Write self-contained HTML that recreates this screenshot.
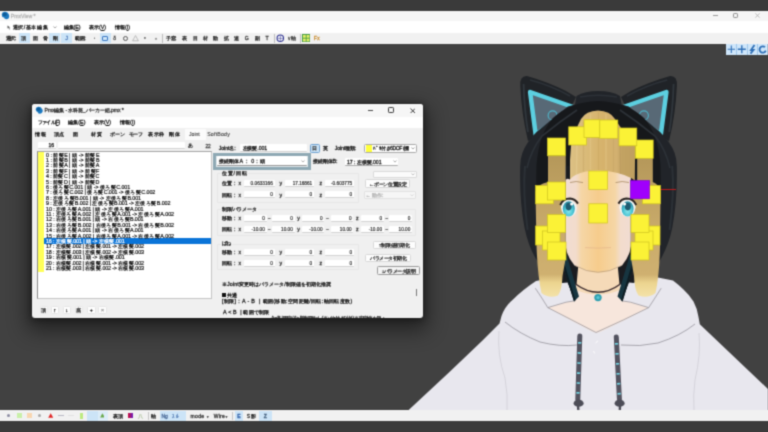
<!DOCTYPE html>
<html lang="ja"><head><meta charset="utf-8"><title>PmxView</title>
<style>
html,body{margin:0;padding:0;overflow:hidden;}
body{width:768px;height:432px;overflow:hidden;background:#414141;position:relative;font-family:"Liberation Sans",sans-serif;}
.b{position:absolute;box-sizing:border-box;}
.t{position:absolute;white-space:nowrap;overflow:visible;-webkit-text-stroke:0.27px currentColor;}
#dlg{position:absolute;left:31.5px;top:104px;width:391px;height:214px;background:#f0f0f0;border-radius:3px;box-shadow:0 8px 20px 5px rgba(0,0,0,.46),0 1px 6px 1px rgba(0,0,0,.34);overflow:hidden;}
.f{position:absolute;box-sizing:border-box;background:#fff;border-bottom:0.6px solid #d2d2d2;border-radius:1px;font-size:4.7px;color:#2a2a2a;-webkit-text-stroke:0.17px currentColor;text-align:right;padding-right:1.8px;white-space:nowrap;overflow:hidden;}
.btn{position:absolute;box-sizing:border-box;background:#fdfdfd;-webkit-text-stroke:0.24px currentColor;border:0.5px solid #d8d8d8;border-radius:1.5px;font-size:5.2px;color:#222;text-align:center;white-space:nowrap;overflow:hidden;}
#clip{position:absolute;left:0;top:0;width:768px;height:432px;overflow:hidden;}
#wrap{position:absolute;left:-16px;top:-16px;width:800px;height:464px;filter:url(#soft);}
#in{position:absolute;left:16px;top:16px;width:768px;height:432px;}
</style></head><body>
<svg width="0" height="0" style="position:absolute"><defs><filter id="soft" x="0" y="0" width="100%" height="100%" color-interpolation-filters="sRGB"><feConvolveMatrix order="3" kernelMatrix="0.03 0.12 0.03 0.12 0.4 0.12 0.03 0.12 0.03" edgeMode="duplicate" preserveAlpha="true"/></filter></defs></svg>
<div id="clip"><div id="wrap"><div id="in">
<div class="b" style="left:-16px;top:-16px;width:800px;height:464px;background:#414141"></div>
<svg class="b" style="left:0;top:0" width="768" height="432" viewBox="0 0 768 432">
<defs>
<linearGradient id="sideh" x1="0" y1="0" x2="0" y2="1"><stop offset="0" stop-color="#b5985a"/><stop offset=".5" stop-color="#c8aa6a"/><stop offset=".84" stop-color="#cfb070"/><stop offset=".9" stop-color="#ecd48f"/><stop offset="1" stop-color="#f4e2a8"/></linearGradient>
<linearGradient id="faceg" x1="0" y1="0" x2="1" y2="0"><stop offset="0" stop-color="#f1dcd2"/><stop offset=".16" stop-color="#f2dccc"/><stop offset=".24" stop-color="#f5d6a6"/><stop offset=".5" stop-color="#f6cc8c"/><stop offset=".76" stop-color="#f5d6a6"/><stop offset=".84" stop-color="#f2dccc"/><stop offset="1" stop-color="#f1dcd2"/></linearGradient>
<linearGradient id="hairc" x1="0" y1="0" x2="1" y2="0"><stop offset="0" stop-color="#dcc084"/><stop offset=".3" stop-color="#d9b976"/><stop offset=".5" stop-color="#d6b26c"/><stop offset=".72" stop-color="#d2b070"/><stop offset=".8" stop-color="#c2a262"/><stop offset="1" stop-color="#bf9f60"/></linearGradient>
<radialGradient id="iris" cx=".5" cy=".65" r=".6"><stop offset="0" stop-color="#8ae6ea"/><stop offset=".6" stop-color="#48c4d4"/><stop offset="1" stop-color="#2a8aa0"/></radialGradient>
</defs>
<!-- ears (behind hood) -->
<path d="M520.3 86 Q519.6 75.6 527 76 Q548 82 566 91 L576 97 L566 118 Q545 132 528 141 Q521.5 114 520.3 86Z" fill="#202327"/>
<path d="M676.9 86 Q677.6 75.6 670.2 76 Q649 82 631 91 L621 97 L631 118 Q652 132 669 141 Q675.7 114 676.9 86Z" fill="#202327"/>
<path d="M523.6 84 Q524.4 110 528 132" fill="none" stroke="#30363c" stroke-width="1.8"/>
<path d="M673.6 84 Q672.8 110 669.2 132" fill="none" stroke="#30363c" stroke-width="1.8"/>
<path d="M530 80 Q550 85 570 96" fill="none" stroke="#2d3238" stroke-width="1.6"/>
<path d="M667.2 80 Q647 85 627 96" fill="none" stroke="#2d3238" stroke-width="1.6"/>
<path d="M530.1 92.0 L574.6 107.5 L535.7 134.6 Z" fill="#586976" stroke="#5ccfe0" stroke-width="4.5" stroke-linejoin="round"/>
<path d="M666.4 92.0 L621.9 107.5 L660.8 134.6 Z" fill="#586976" stroke="#5ccfe0" stroke-width="4.5" stroke-linejoin="round"/>
<circle cx="552.6" cy="115.4" r="4.5" fill="none" stroke="#4fb4c8" stroke-width="1.1"/>
<circle cx="643.9" cy="115.4" r="4.5" fill="none" stroke="#4fb4c8" stroke-width="1.1"/>
<!-- hood (black) outer -->
<path d="M598 91 Q585 91 576.5 96 L575 104.5 L567.8 106.6 L536.8 131.8 Q526.5 142 522.4 153 Q520.2 159 520.2 166 Q519.2 200 524.6 228 Q528.6 248 538 262 L546 292 L575 300 L621 300 L652 292 L659 262 Q668.6 246 672.2 228 Q677.6 200 676.8 166 Q676.8 159 674.6 153 Q670.5 142 659.8 131.8 L628.8 106.6 L621.6 104.5 L620 96 Q612 91 598 91Z" fill="#212429"/>
<path d="M598 101 Q570 102 553 118 Q539 134 536.5 165 Q535.5 205 540 235 L548 262 L649 262 L657 235 Q661.5 205 660.5 165 Q658 134 644 118 Q627 102 598 101Z" fill="#16181b"/>
<!-- hood folds -->
<path d="M527 168 Q531 150 542 136 L560 122 L577 110" fill="none" stroke="#2c3137" stroke-width="1.6"/>
<path d="M670 168 Q666 150 655 136 L637 122 L620 110" fill="none" stroke="#2c3137" stroke-width="1.6"/>
<path d="M527.6 230 Q522.6 192 525 166" fill="none" stroke="#2b3036" stroke-width="2"/>
<path d="M669.6 230 Q674.6 192 672.2 166" fill="none" stroke="#2b3036" stroke-width="2"/>
<path d="M580 97 Q598 93.5 617 97" fill="none" stroke="#2c3137" stroke-width="1.4"/>
<!-- hoodie body -->
<path d="M406.5 412 L450 371.6 L482.5 340.6 L499.5 323.5 L501.5 316 Q505 306 513 299.5 Q523 289.5 536 281 L548 278.5 L556 282 L640 282 L650 277.5 L658 277.5 L673 280.5 Q679 285 683.5 289.5 Q689.5 295 693.5 301.5 Q697.5 309 698.5 317 L699.8 324.2 L768 389 L768 412 Z" fill="#e8e7ee"/>
<!-- seams -->
<path d="M499 331 Q497 355 505 378 Q508 395 507 410" fill="none" stroke="#cfced6" stroke-width=".8"/>
<path d="M699 333 Q701 355 695 380 Q693 395 694 410" fill="none" stroke="#cfced6" stroke-width=".8"/>
<path d="M505 322 Q520 334 540 342 Q560 347 577 345" fill="none" stroke="#8a8890" stroke-width=".7"/>
<path d="M695 324 Q680 336 658 343 Q640 347 621 345" fill="none" stroke="#8a8890" stroke-width=".7"/>
<!-- dark interior near neck -->
<path d="M562 255 L634.5 255 L634.5 283 L629 282.5 L621.3 300.8 L575.2 300.8 L567.5 282.5 L562 283Z" fill="#1a1c20"/>
<!-- chest skin -->
<path d="M548 307.5 L566 302.2 L575.5 300.6 L575.5 284 L621 284 L621 300.6 L630.5 302.2 L648.5 307.5 Q630 318 600 332 Q596 333.5 592 331.5 Q566 318 548 307.5 Z" fill="#f7e6dc"/>
<path d="M535.3 288.2 Q542 298 547.8 307.6 L566 302.2 L575 300.8 M547.8 307.6 Q572 320 596 332.5 Q624 320 648.7 307.6 L630.5 302.2 L621.5 300.8 M648.7 307.6 Q655 298 661.2 288.2" fill="none" stroke="#8f8c94" stroke-width=".7"/>
<!-- neck -->
<path d="M579 258 L617 258 L620 290 Q598 299 576 290Z" fill="#f5dab8"/>
<!-- straps -->
<path d="M560 256 L566.6 255 L579 296.5 L574 301.5 Z" fill="#173540"/><path d="M560 256 L562 255.6 L575.4 300 L574 301.5Z" fill="#0e1c22"/>
<path d="M636.5 256 L629.9 255 L617.5 296.5 L622.5 301.5 Z" fill="#173540"/><path d="M636.5 256 L634.5 255.6 L621.1 300 L622.5 301.5Z" fill="#0e1c22"/>

<!-- choker -->
<path d="M575.5 284 Q598 300.5 620.5 284" fill="none" stroke="#3a2a2c" stroke-width="1.5"/>
<circle cx="598" cy="297.6" r="3.7" fill="#2f9fb0"/><circle cx="598" cy="297.6" r="1.7" fill="#56c6d4"/>
<!-- side hair long -->
<path d="M548 156 L565.7 156 L565.7 258 L562.5 276 Q562 290 558 295.5 Q549 299 541.5 293 Q537.5 275 536.5 245 L535.5 192 Q537 184 548 182 Z" fill="url(#sideh)"/>
<path d="M652.8 158 L637.2 158 L637.2 181 L631 183 L631 258 L634 276 Q634.5 290 638.5 295.5 Q648 299 655.5 293 Q659.5 275 660 245 L660.5 192 Q659 184 652.8 182 Z" fill="url(#sideh)"/>
<!-- face -->
<path d="M565.7 166 L630.8 166 L630.8 246 Q630 256 622 265.5 Q608 272.6 598 272.6 Q588 272.6 574.5 265.5 Q566.5 256 565.7 246Z" fill="url(#faceg)"/>
<path d="M575 265.5 Q598 279 621.5 265.5" fill="none" stroke="#a89078" stroke-width=".6"/>
<path d="M585 247.6 Q598 248.6 611 247.6" fill="none" stroke="#e0b088" stroke-width=".6"/>
<!-- center hair -->
<path d="M598 110.6 Q586 111 581 119 Q575 130 571 146 L570 160 L570 179.5 Q574 174 586 171.5 Q598 169.5 610 171.5 Q626 174 634.8 180.5 L635 160 L635.2 146 Q622 130 615 119 Q610 111 598 110.6Z" fill="url(#hairc)"/>
<g stroke-width="1.3" fill="none" opacity=".45">
<path d="M577 140 L576.5 174" stroke="#e9d29a"/><path d="M583.5 122 L583.5 171.5" stroke="#c4a464"/><path d="M590.5 114 L590.5 170.5" stroke="#e6cc8e"/>
<path d="M598.5 112 L598.5 170" stroke="#c8a55e"/><path d="M606 114 L606 170.5" stroke="#e6cc8e"/><path d="M613.5 122 L613.5 172" stroke="#c4a464"/><path d="M620 132 L620.5 174" stroke="#b4945a"/>
</g>
<path d="M565.7 166 L570 166 L570 179.5 Q567 178 565.7 180Z" fill="#1a1c20"/>
<!-- eyes -->
<g>
<path d="M560.8 207 Q562 199.5 569 199.5 Q576 200.5 576.6 208 Q576 216.5 569 216.8 Q562 216 560.8 207Z" fill="#f2f6f6"/>
<ellipse cx="568.8" cy="208.8" rx="6" ry="7.6" fill="url(#iris)"/><ellipse cx="568.6" cy="206.6" rx="3" ry="3.8" fill="#1f5a70"/><circle cx="571.6" cy="204" r="1.5" fill="#fff"/>
<path d="M560.2 205 Q563 198.6 570 198.6 Q575 199 578 203.6" fill="none" stroke="#2a2422" stroke-width="2"/>
<path d="M619.4 207 Q620 200.5 627.5 199.5 Q634.5 199.5 635.6 207 Q634.5 216 627.5 216.8 Q620.5 216.5 619.4 207Z" fill="#f2f6f6"/>
<ellipse cx="627.6" cy="208.8" rx="6" ry="7.6" fill="url(#iris)"/><ellipse cx="627.8" cy="206.6" rx="3" ry="3.8" fill="#1f5a70"/><circle cx="624.6" cy="204" r="1.5" fill="#fff"/>
<path d="M636.2 205 Q633.4 198.6 626.4 198.6 Q621.4 199 618.4 203.6" fill="none" stroke="#2a2422" stroke-width="2"/>
<path d="M570 182.5 Q576 180.5 583 182.6" fill="none" stroke="#a88a62" stroke-width=".8"/><path d="M629 182.5 Q622 180.5 615.6 182.6" fill="none" stroke="#a88a62" stroke-width=".8"/>
</g>
<!-- drawstrings -->
<path d="M579.8 336 Q578.6 370 577.8 399" fill="none" stroke="#53535f" stroke-width="5" stroke-linecap="round"/>
<path d="M616.3 337 Q618 370 619.4 399" fill="none" stroke="#53535f" stroke-width="5" stroke-linecap="round"/>
<path d="M579.7 342 Q578.6 370 577.9 397" fill="none" stroke="#6fd0de" stroke-width="3.2" stroke-dasharray="1.7 8.3"/>
<path d="M616.5 343 Q618 370 619.3 397" fill="none" stroke="#6fd0de" stroke-width="3.2" stroke-dasharray="1.7 8.3"/>
<ellipse cx="578.6" cy="403.2" rx="5" ry="3.6" fill="#4c4c57"/><ellipse cx="619.6" cy="403.2" rx="5" ry="3.6" fill="#4c4c57"/>
<path d="M578 405 L578.4 411 M620 405 L619.8 411" stroke="#4c4c57" stroke-width="2.4"/>
<path d="M595.5 343 l2.4 -2 M593.5 351 l1.2 2.4" stroke="#fff" stroke-width=".9"/>
<!-- red axis line -->
<path d="M649 189.5 H676" stroke="#e01818" stroke-width=".8"/>
<!-- joint markers -->
<g fill="#fbf236" stroke="#cfc422" stroke-width=".7">
<rect x="535.5" y="185.5" width="18" height="18.3"/>
<rect x="642.5" y="185.5" width="18" height="18.3"/>
<rect x="547.4" y="138" width="18" height="17.8"/>
<rect x="635.2" y="140" width="18" height="18.3"/>
<rect x="568.7" y="126.8" width="17.8" height="18.2"/>
<rect x="619" y="128" width="17.8" height="17.8"/>
<rect x="584" y="119.8" width="16" height="17.7"/>
<rect x="599.8" y="120" width="18" height="18.3"/>
<rect x="588.8" y="171" width="18.7" height="18.5"/>
<rect x="588.8" y="203.8" width="18.7" height="19.2"/>
<rect x="547.5" y="182" width="18" height="18"/>
<rect x="535.5" y="226" width="17.5" height="19"/>
<rect x="642.5" y="226" width="17.5" height="19"/>
<rect x="542.5" y="231" width="17.5" height="19"/>
<rect x="635" y="231" width="18" height="19"/>
<rect x="547.5" y="214.5" width="18" height="18"/>
<rect x="631" y="214.5" width="18" height="18"/>
<rect x="547.5" y="242" width="18.5" height="18"/>
<rect x="631" y="242" width="18" height="18"/>
</g>
<rect x="630.5" y="180.5" width="19" height="18.3" fill="#a000fc" stroke="#7a00c8" stroke-width=".6"/>
</svg>


<div class="b" style="left:-10px;top:-10px;width:788px;height:20.5px;background:#3a3a3a;"></div>
<div class="b" style="left:-10px;top:10.5px;width:788px;height:10.5px;background:#f5f5f5;"></div>
<div class="b" style="left:-10px;top:21px;width:788px;height:11.5px;background:#ffffff;"></div>
<div class="b" style="left:-10px;top:32.5px;width:788px;height:11.5px;background:#f1f1f1;"></div>
<svg class="b" style="left:0.8px;top:11.3px" width="9" height="9" viewBox="0 0 9 9"><path d="M3.6 .7 Q6.6 .5 7.2 2.6 Q8.6 4 8.2 6 Q7.6 8.4 5.4 8.3 Q3.4 8.2 3 6.6 Q.6 6 .7 3.4 Q.9 .9 3.6 .7Z" fill="#1b78bf"/><path d="M3.4 1.6 Q5.6 1.4 5.8 3.2 Q5.8 5 3.8 5.2 Q1.8 5.2 1.7 3.4 Q1.7 1.8 3.4 1.6Z" fill="#0f5c98"/></svg>
<div class="t" style="left:10.8px;top:12.78px;font-size:5.2px;line-height:6.24px;color:#b4b4b4;letter-spacing:-0.033px;">PmxView *</div>
<div class="b" style="left:712.5px;top:15.4px;width:5px;height:0.6px;background:#9a9a9a;"></div>
<div class="b" style="left:733.4px;top:13.2px;width:4.8px;height:4.4px;border:0.6px solid #909090;border-radius:1.2px"></div>
<svg class="b" style="left:754.6px;top:13px" width="5" height="5" viewBox="0 0 5 5"><path d="M.4 .4L4.6 4.6M4.6 .4L.4 4.6" stroke="#a4a4a4" stroke-width=".7"/></svg>
<svg class="b" style="left:7.3px;top:24.6px" width="4" height="5" viewBox="0 0 4 5"><path d="M.5 .5V3.6L1.4 2.8L2.2 4.5L2.9 4.2L2.1 2.6H3.2Z" fill="#555"/></svg>
<div class="t" style="left:12.6px;top:23.66px;font-size:5.4px;line-height:6.48px;color:#222;letter-spacing:0.600px;">選択/基本編集</div>
<svg class="b" style="left:53.00px;top:25.70px" width="4.0" height="2.6" viewBox="0 0 4.0 2.6"><path d="M.5 .5L2.0 2.1L3.5 .5" fill="none" stroke="#666" stroke-width="0.6"/></svg>
<div class="t" style="left:63.7px;top:23.66px;font-size:5.4px;line-height:6.48px;color:#222;letter-spacing:-0.100px;">編集(<u>E</u>)</div>
<div class="t" style="left:88.8px;top:23.66px;font-size:5.4px;line-height:6.48px;color:#222;letter-spacing:0.040px;">表示(<u>V</u>)</div>
<div class="t" style="left:115px;top:23.66px;font-size:5.4px;line-height:6.48px;color:#222;letter-spacing:0.000px;">情報(<u>I</u>)</div>
<div class="t" style="left:5.6px;top:35.16px;font-size:5.4px;line-height:6.48px;color:#222;letter-spacing:-0.433px;">選択:</div>
<div class="b" style="left:19.4px;top:33.3px;width:10.8px;height:10.2px;background:#cce4f7;"></div>
<div class="b" style="left:49.4px;top:33.3px;width:10.8px;height:10.2px;background:#cce4f7;"></div>
<div class="b" style="left:61px;top:33.3px;width:11px;height:10.2px;background:#cce4f7;"></div>
<div class="t" style="left:21.4px;top:35.16px;font-size:5.4px;line-height:6.48px;color:#333;">頂</div>
<div class="t" style="left:32.8px;top:35.16px;font-size:5.4px;line-height:6.48px;color:#333;">面</div>
<div class="t" style="left:42.8px;top:35.16px;font-size:5.4px;line-height:6.48px;color:#333;">骨</div>
<div class="t" style="left:52.8px;top:35.16px;font-size:5.4px;line-height:6.48px;color:#333;">剛</div>
<div class="t" style="left:65.2px;top:35.16px;font-size:5.4px;line-height:6.48px;color:#4a78b8;">J</div>
<div class="t" style="left:75px;top:35.16px;font-size:5.4px;line-height:6.48px;color:#222;letter-spacing:-0.333px;">範囲:</div>
<div class="t" style="left:91.5px;top:35.52px;font-size:4.8px;line-height:5.76px;color:#444;">・</div>
<div class="b" style="left:99.7px;top:33.3px;width:11.3px;height:10.2px;background:#cce4f7;"></div>
<div class="b" style="left:102.2px;top:35.7px;width:6.2px;height:5.6px;border:0.8px solid #3b78c4;border-radius:1px;border-top-width:1.5px"></div>
<div class="t" style="left:113.3px;top:35.40px;font-size:5px;line-height:6.00px;color:#444;">δ</div>
<div class="b" style="left:122.8px;top:35.8px;width:5.4px;height:5.4px;border:0.7px solid #555;border-radius:3px"></div>
<svg class="b" style="left:132px;top:35.3px" width="7" height="6.4" viewBox="0 0 7 6.4"><path d="M3.5 .6 L6.4 5.8 L.6 5.8Z" fill="none" stroke="#999" stroke-width=".6"/></svg>
<div class="t" style="left:143.8px;top:36.12px;font-size:3.8px;line-height:4.56px;color:#666;">●</div>
<div class="t" style="left:154.8px;top:35.76px;font-size:4.4px;line-height:5.28px;color:#888;">×</div>
<div class="b" style="left:162.2px;top:34px;width:0.6px;height:9px;background:#bdbdbd;"></div>
<div class="t" style="left:166px;top:35.16px;font-size:5.4px;line-height:6.48px;color:#222;letter-spacing:-0.500px;">子窓:</div>
<div class="t" style="left:182.3px;top:35.28px;font-size:5.2px;line-height:6.24px;color:#333;">表</div>
<div class="t" style="left:192.5px;top:35.28px;font-size:5.2px;line-height:6.24px;color:#333;">目</div>
<div class="t" style="left:203px;top:35.28px;font-size:5.2px;line-height:6.24px;color:#333;">材</div>
<div class="t" style="left:213.3px;top:35.28px;font-size:5.2px;line-height:6.24px;color:#333;">動</div>
<div class="t" style="left:224px;top:35.28px;font-size:5.2px;line-height:6.24px;color:#333;">拡</div>
<div class="t" style="left:234.2px;top:35.28px;font-size:5.2px;line-height:6.24px;color:#333;">連</div>
<div class="t" style="left:244.8px;top:35.28px;font-size:5.2px;line-height:6.24px;color:#333;">G</div>
<div class="t" style="left:254.6px;top:35.28px;font-size:5.2px;line-height:6.24px;color:#333;">副</div>
<div class="t" style="left:265.4px;top:35.28px;font-size:5.2px;line-height:6.24px;color:#333;">T</div>
<div class="b" style="left:273.8px;top:34px;width:0.6px;height:9px;background:#bdbdbd;"></div>
<svg class="b" style="left:276px;top:34px" width="8.6" height="8.6" viewBox="0 0 8 8"><circle cx="4" cy="4" r="3" fill="#fff" stroke="#2b2f8e" stroke-width="1"/><path d="M4 1.5V6.5M1.5 4H6.5" stroke="#2b2f8e" stroke-width=".5"/></svg>
<div class="t" style="left:288px;top:35.72px;font-size:4.8px;line-height:5.76px;color:#444;letter-spacing:0.500px;">v軸</div>
<div class="b" style="left:300.4px;top:34px;width:0.6px;height:9px;background:#bdbdbd;"></div>
<svg class="b" style="left:302px;top:34px" width="8.4" height="8.4" viewBox="0 0 8 8"><rect x=".5" y=".5" width="7" height="7" fill="#e8f06a" stroke="#3f9a3f" stroke-width=".9"/><path d="M4 .5V7.5M.5 4H7.5" stroke="#3f9a3f" stroke-width=".8"/></svg>
<div class="t" style="left:314px;top:35.72px;font-size:4.8px;line-height:5.76px;color:#c88a2a;letter-spacing:0.250px;">Fx</div>
<div class="b" style="left:725.7px;top:44.3px;width:42.3px;height:10.4px;background:#cfe6fa;"></div>
<div class="b" style="left:735.95px;top:44.3px;width:0.6px;height:10.4px;background:#9fc6ea;"></div>
<div class="b" style="left:746.5000000000001px;top:44.3px;width:0.6px;height:10.4px;background:#9fc6ea;"></div>
<div class="b" style="left:757.0500000000001px;top:44.3px;width:0.6px;height:10.4px;background:#9fc6ea;"></div>
<svg class="b" style="left:725.7px;top:44.3px" width="42.3" height="10.4" viewBox="0 0 42.3 10.4"><g stroke="#2f6fb6" stroke-width="1.1" fill="none"><path d="M5.3 1.5V8.9M1.6 5.2H9"/><path d="M15.8 1.2V9.2M11.8 5.2H19.8" stroke-width="1.4"/><path d="M28.5 1 L25 6 L27.5 6 L24.5 9.6" stroke-width="1.8"/><path d="M39.8 6.6 A3.2 3.2 0 1 1 39 3.2" stroke-width="1.8"/></g></svg>
<div class="b" style="left:-10px;top:410.2px;width:788px;height:11.1px;background:#f1f1f1;"></div>
<div class="b" style="left:-10px;top:421.3px;width:788px;height:20.7px;background:#3b3b3b;"></div>
<div class="b" style="left:6.9px;top:413.9px;width:3.6px;height:3.6px;border-radius:2px;background:#8a8aa0"></div>
<div class="b" style="left:16.5px;top:413px;width:5.2px;height:5.4px;background:#c9f0a8;"></div>
<div class="b" style="left:26.5px;top:413px;width:5.2px;height:5.4px;background:#f8d6b0;"></div>
<div class="b" style="left:37.9px;top:413.9px;width:3.6px;height:3.6px;border-radius:2px;background:#a8a8a8"></div>
<svg class="b" style="left:47.5px;top:413px" width="5.4" height="5" viewBox="0 0 5.4 5"><path d="M2.7 .3L5.2 4.7H.2Z" fill="#e02424"/></svg>
<div class="b" style="left:57.5px;top:415.4px;width:6px;height:0.7px;background:#b8b8c4;"></div>
<div class="b" style="left:68px;top:415.4px;width:6px;height:0.7px;background:#e2e2e2;"></div>
<div class="b" style="left:80.3px;top:412.6px;width:2.6px;height:6.2px;background:#bdea80;"></div>
<div class="b" style="left:86.8px;top:411px;width:11.4px;height:9.6px;background:#cce4f7;"></div>
<div class="b" style="left:98.2px;top:411px;width:10px;height:9.6px;background:#dcecf8;"></div>
<svg class="b" style="left:99.5px;top:413.3px" width="4.8" height="4.6" viewBox="0 0 4.8 4.6"><path d="M2.4 .2L4.7 4.4H.1Z" fill="#69a84a"/></svg>
<div class="t" style="left:113px;top:412.68px;font-size:5.2px;line-height:6.24px;color:#222;letter-spacing:0.200px;">表頂</div>
<div class="b" style="left:128.3px;top:413.2px;width:5px;height:5px;background:linear-gradient(90deg,#d0103a,#6a20c0);"></div>
<div class="t" style="left:138.2px;top:412.80px;font-size:5px;line-height:6.00px;color:#b8c8a8;">八</div>
<div class="b" style="left:147.5px;top:411.5px;width:0.6px;height:8.5px;background:#c4c4c4;"></div>
<div class="t" style="left:151.3px;top:412.80px;font-size:5px;line-height:6.00px;color:#333;">軸</div>
<div class="b" style="left:159.7px;top:411px;width:26.6px;height:9.6px;background:#cce4f7;"></div>
<div class="t" style="left:161.5px;top:412.80px;font-size:5px;line-height:6.00px;color:#4a6a98;">Ng</div>
<div class="t" style="left:172.3px;top:412.80px;font-size:5px;line-height:6.00px;color:#5a82b8;letter-spacing:1.200px;">ｽﾙ</div>
<div class="t" style="left:190.5px;top:412.80px;font-size:5px;line-height:6.00px;color:#333;letter-spacing:0.367px;">mode <span style='font-size:3px;vertical-align:0.4px'>▼</span></div>
<div class="t" style="left:213.8px;top:412.80px;font-size:5px;line-height:6.00px;color:#333;letter-spacing:0.240px;">Wire<span style='font-size:3px;vertical-align:0.4px'>▼</span></div>
<div class="b" style="left:232px;top:411.5px;width:0.6px;height:8.5px;background:#c4c4c4;"></div>
<div class="b" style="left:234.7px;top:411px;width:8.6px;height:9.6px;background:#cce4f7;"></div>
<div class="t" style="left:237.2px;top:412.80px;font-size:5px;line-height:6.00px;color:#2f5fa8;font-weight:bold;">E</div>
<div class="t" style="left:246.8px;top:412.80px;font-size:5px;line-height:6.00px;color:#333;letter-spacing:0.600px;">S影</div>
<div class="b" style="left:259.3px;top:411px;width:12.4px;height:9.6px;background:#cce4f7;"></div>
<div class="t" style="left:263.8px;top:412.68px;font-size:5.2px;line-height:6.24px;color:#44607e;font-weight:bold;">Z</div>
<div id="dlg">
<div class="b" style="left:0.0px;top:0px;width:391px;height:13px;background:#f6f6f6;"></div>
<div class="b" style="left:0.0px;top:13px;width:391px;height:11px;background:#ffffff;"></div>
<svg class="b" style="left:3.299999999999997px;top:2.200000000000003px" width="8.4" height="8.4" viewBox="0 0 9 9"><path d="M3.6 .7 Q6.6 .5 7.2 2.6 Q8.6 4 8.2 6 Q7.6 8.4 5.4 8.3 Q3.4 8.2 3 6.6 Q.6 6 .7 3.4 Q.9 .9 3.6 .7Z" fill="#1b78bf"/><path d="M3.4 1.6 Q5.6 1.4 5.8 3.2 Q5.8 5 3.8 5.2 Q1.8 5.2 1.7 3.4 Q1.7 1.8 3.4 1.6Z" fill="#0f5c98"/></svg>
<div class="t" style="left:13.100000000000001px;top:3.48px;font-size:5.2px;line-height:6.24px;color:#333;letter-spacing:-0.157px;">Pmx編集 - 水科葵_パーカー組.pmx *</div>
<div class="b" style="left:336.5px;top:6.099999999999994px;width:4.8px;height:0.7px;background:#4a4a4a;"></div>
<div class="b" style="left:356.5px;top:3.299999999999997px;width:6.2px;height:5.6px;border:0.9px solid #3c3c3c;border-radius:1.2px"></div>
<svg class="b" style="left:378.1px;top:3.5999999999999943px" width="5.6" height="5.6" viewBox="0 0 5.6 5.6"><path d="M.5 .5L5.1 5.1M5.1 .5L.5 5.1" stroke="#3c3c3c" stroke-width="1"/></svg>
<div class="t" style="left:6.299999999999997px;top:15.46px;font-size:5.4px;line-height:6.48px;color:#222;letter-spacing:-0.743px;">ファイル(<u>F</u>)</div>
<div class="t" style="left:36.900000000000006px;top:15.46px;font-size:5.4px;line-height:6.48px;color:#222;letter-spacing:-0.040px;">編集(<u>E</u>)</div>
<div class="t" style="left:62.5px;top:15.46px;font-size:5.4px;line-height:6.48px;color:#222;letter-spacing:-0.020px;">表示(<u>V</u>)</div>
<div class="t" style="left:88.5px;top:15.46px;font-size:5.4px;line-height:6.48px;color:#222;letter-spacing:0.060px;">情報(<u>I</u>)</div>
<div class="b" style="left:153.5px;top:24.5px;width:20.5px;height:11px;background:#fbfbfb;"></div>
<div class="t" style="left:3.5px;top:26.66px;font-size:5.4px;line-height:6.48px;color:#222;letter-spacing:0.500px;">情報</div>
<div class="t" style="left:22.5px;top:26.66px;font-size:5.4px;line-height:6.48px;color:#222;letter-spacing:0.250px;">頂点</div>
<div class="t" style="left:41.0px;top:26.66px;font-size:5.4px;line-height:6.48px;color:#222;letter-spacing:0.500px;">面</div>
<div class="t" style="left:59.5px;top:26.66px;font-size:5.4px;line-height:6.48px;color:#222;letter-spacing:0.500px;">材質</div>
<div class="t" style="left:78.5px;top:26.66px;font-size:5.4px;line-height:6.48px;color:#222;letter-spacing:0.000px;">ボーン</div>
<div class="t" style="left:97.5px;top:26.66px;font-size:5.4px;line-height:6.48px;color:#222;letter-spacing:-0.733px;">モーフ</div>
<div class="t" style="left:116.9px;top:26.66px;font-size:5.4px;line-height:6.48px;color:#222;letter-spacing:0.133px;">表示枠</div>
<div class="t" style="left:137.5px;top:26.66px;font-size:5.4px;line-height:6.48px;color:#222;letter-spacing:0.750px;">剛体</div>
<div class="t" style="left:157.5px;top:26.78px;font-size:5.2px;line-height:6.24px;color:#2e2e2e;letter-spacing:-0.040px;-webkit-text-stroke:0.06px currentColor;">Joint</div>
<div class="t" style="left:175.7px;top:26.78px;font-size:5.2px;line-height:6.24px;color:#2e2e2e;letter-spacing:0.225px;-webkit-text-stroke:0.06px currentColor;">SoftBody</div>
<div class="f" style="left:6.00px;top:38.10px;width:18px;height:7.4px;line-height:7.2px;padding-right:1.5px;font-size:5px;color:#111;-webkit-text-stroke:0.25px #111;">16</div>
<div class="f" style="left:26.50px;top:38.10px;width:126.5px;height:7.4px;line-height:7.2px;"></div>
<div class="t" style="left:156.5px;top:38.92px;font-size:4.8px;line-height:5.76px;color:#333;">あ</div>
<div class="t" style="left:173.9px;top:40.42px;font-size:4.8px;line-height:5.76px;color:#444;letter-spacing:0.000px;">22</div>
<div class="b" style="left:5.5px;top:47px;width:174.5px;height:148px;background:#ffffff;border:0.7px solid #c4c4c4;border-left-color:#8a8a8a;border-top-color:#a4a4a4;"></div>
<div class="b" style="left:6.399999999999999px;top:47.80000000000001px;width:5.8px;height:119.8px;background:#ffff58;"></div>
<div class="b" style="left:12.299999999999997px;top:134.42px;width:167px;height:5.3px;background:#0a74d8;"></div>
<div class="b" style="left:14.100000000000001px;top:48.00px;width:660px;height:480px;transform:scale(.25);transform-origin:0 0;">
<div class="t" style="left:0;top:0.00px;font-size:21.6px;line-height:21.6px;color:#101010;-webkit-text-stroke:0.8px #101010;letter-spacing:-0.244px;">0 : 前髪E | 頭 -&gt; 前髪E</div>
<div class="t" style="left:0;top:21.58px;font-size:21.6px;line-height:21.6px;color:#101010;-webkit-text-stroke:0.8px #101010;letter-spacing:-0.244px;">1 : 前髪B | 頭 -&gt; 前髪B</div>
<div class="t" style="left:0;top:43.16px;font-size:21.6px;line-height:21.6px;color:#101010;-webkit-text-stroke:0.8px #101010;letter-spacing:-0.189px;">2 : 前髪A | 頭 -&gt; 前髪A</div>
<div class="t" style="left:0;top:64.74px;font-size:21.6px;line-height:21.6px;color:#101010;-webkit-text-stroke:0.8px #101010;letter-spacing:-0.133px;">3 : 前髪F | 頭 -&gt; 前髪F</div>
<div class="t" style="left:0;top:86.32px;font-size:21.6px;line-height:21.6px;color:#101010;-webkit-text-stroke:0.8px #101010;letter-spacing:-0.411px;">4 : 前髪C | 頭 -&gt; 前髪C</div>
<div class="t" style="left:0;top:107.90px;font-size:21.6px;line-height:21.6px;color:#101010;-webkit-text-stroke:0.8px #101010;letter-spacing:-0.411px;">5 : 前髪D | 頭 -&gt; 前髪D</div>
<div class="t" style="left:0;top:129.48px;font-size:21.6px;line-height:21.6px;color:#101010;-webkit-text-stroke:0.8px #101010;letter-spacing:-0.521px;">6 : 後ろ髪C.001 | 頭 -&gt; 後ろ髪C.001</div>
<div class="t" style="left:0;top:151.06px;font-size:21.6px;line-height:21.6px;color:#101010;-webkit-text-stroke:0.8px #101010;letter-spacing:-0.474px;">7 : 後ろ髪C.002 | 後ろ髪C.001 -&gt; 後ろ髪C.002</div>
<div class="t" style="left:0;top:172.64px;font-size:21.6px;line-height:21.6px;color:#101010;-webkit-text-stroke:0.8px #101010;letter-spacing:-0.413px;">8 : 左後ろ髪B.001 | 頭 -&gt; 左後ろ髪B.001</div>
<div class="t" style="left:0;top:194.22px;font-size:21.6px;line-height:21.6px;color:#101010;-webkit-text-stroke:0.8px #101010;letter-spacing:-0.484px;">9 : 左後ろ髪B.002 | 左後ろ髪B.001 -&gt; 左後ろ髪B.002</div>
<div class="t" style="left:0;top:215.80px;font-size:21.6px;line-height:21.6px;color:#101010;-webkit-text-stroke:0.8px #101010;letter-spacing:-0.465px;">10 : 左後ろ髪A.001 | 頭 -&gt; 左後ろ髪A.001</div>
<div class="t" style="left:0;top:237.38px;font-size:21.6px;line-height:21.6px;color:#101010;-webkit-text-stroke:0.8px #101010;letter-spacing:-0.359px;">11 : 左後ろ髪A.002 | 左後ろ髪A.001 -&gt; 左後ろ髪A.002</div>
<div class="t" style="left:0;top:258.96px;font-size:21.6px;line-height:21.6px;color:#101010;-webkit-text-stroke:0.8px #101010;letter-spacing:-0.465px;">12 : 右後ろ髪B.001 | 頭 -&gt; 右後ろ髪B.001</div>
<div class="t" style="left:0;top:280.54px;font-size:21.6px;line-height:21.6px;color:#101010;-webkit-text-stroke:0.8px #101010;letter-spacing:-0.410px;">13 : 右後ろ髪B.002 | 右後ろ髪B.001 -&gt; 右後ろ髪B.002</div>
<div class="t" style="left:0;top:302.12px;font-size:21.6px;line-height:21.6px;color:#101010;-webkit-text-stroke:0.8px #101010;letter-spacing:-0.465px;">14 : 右後ろ髪A.001 | 頭 -&gt; 右後ろ髪A.001</div>
<div class="t" style="left:0;top:323.70px;font-size:21.6px;line-height:21.6px;color:#101010;-webkit-text-stroke:0.8px #101010;letter-spacing:-0.410px;">15 : 右後ろ髪A.002 | 右後ろ髪A.001 -&gt; 右後ろ髪A.002</div>
<div class="t" style="left:0;top:345.28px;font-size:21.6px;line-height:21.6px;color:#ffffff;-webkit-text-stroke:0.8px #ffffff;letter-spacing:-0.570px;">16 : 左横髪.001 | 頭 -&gt; 左横髪.001</div>
<div class="t" style="left:0;top:366.86px;font-size:21.6px;line-height:21.6px;color:#101010;-webkit-text-stroke:0.8px #101010;letter-spacing:-0.739px;">17 : 左横髪.002 | 左横髪.001 -&gt; 左横髪.002</div>
<div class="t" style="left:0;top:388.44px;font-size:21.6px;line-height:21.6px;color:#101010;-webkit-text-stroke:0.8px #101010;letter-spacing:-0.739px;">18 : 左横髪.003 | 左横髪.002 -&gt; 左横髪.003</div>
<div class="t" style="left:0;top:410.02px;font-size:21.6px;line-height:21.6px;color:#101010;-webkit-text-stroke:0.8px #101010;letter-spacing:-0.570px;">19 : 右横髪.001 | 頭 -&gt; 右横髪.001</div>
<div class="t" style="left:0;top:431.60px;font-size:21.6px;line-height:21.6px;color:#101010;-webkit-text-stroke:0.8px #101010;letter-spacing:-0.739px;">20 : 右横髪.002 | 右横髪.001 -&gt; 右横髪.002</div>
<div class="t" style="left:0;top:453.18px;font-size:21.6px;line-height:21.6px;color:#101010;-webkit-text-stroke:0.8px #101010;letter-spacing:-0.739px;">21 : 右横髪.003 | 右横髪.002 -&gt; 右横髪.003</div>
</div>
<div class="btn" style="left:8.50px;top:201.80px;width:7.6px;height:8.4px;line-height:7.6000000000000005px;color:#222;font-size:5.2px;border-color:#e6e6e6;">頂</div>
<div class="btn" style="left:19.30px;top:201.80px;width:8.2px;height:8.4px;line-height:7.6000000000000005px;color:#222;font-size:5.2px;border-color:#e6e6e6;">↑</div>
<div class="btn" style="left:31.30px;top:201.80px;width:8.2px;height:8.4px;line-height:7.6000000000000005px;color:#222;font-size:5.2px;border-color:#e6e6e6;">↓</div>
<div class="btn" style="left:43.30px;top:201.80px;width:7.8px;height:8.4px;line-height:7.6000000000000005px;color:#222;font-size:5.2px;border-color:#e6e6e6;">底</div>
<div class="btn" style="left:55.10px;top:201.80px;width:9.4px;height:8.4px;line-height:7.6000000000000005px;color:#222;font-size:5.2px;border-color:#e6e6e6;">+</div>
<div class="btn" style="left:66.50px;top:201.80px;width:8.8px;height:8.4px;line-height:7.6000000000000005px;color:#999;font-size:5.2px;border-color:#e6e6e6;">×</div>
<div class="t" style="left:187.3px;top:41.12px;font-size:5.3px;line-height:6.36px;color:#222;letter-spacing:-0.143px;">Joint名:</div>
<div class="f" style="left:208.50px;top:40.40px;width:67px;height:7.6px;line-height:7.3999999999999995px;"></div>
<div class="t" style="left:211.0px;top:41.18px;font-size:5.2px;line-height:6.24px;color:#222;letter-spacing:-0.071px;">左横髪.001</div>
<div class="b" style="left:278.0px;top:39.80000000000001px;width:10.6px;height:8.8px;background:#cce4f7;border:0.6px solid #6ea0d0;border-radius:1.5px"></div>
<div class="t" style="left:280.8px;top:41.30px;font-size:5px;line-height:6.00px;color:#333;">日</div>
<div class="t" style="left:291.9px;top:40.88px;font-size:5.2px;line-height:6.24px;color:#222;">英</div>
<div class="t" style="left:303.3px;top:41.12px;font-size:5.3px;line-height:6.36px;color:#222;letter-spacing:-0.200px;">Joint種類:</div>
<div class="b" style="left:332.9px;top:40.19999999999999px;width:52.4px;height:8.8px;background:#fff;border:0.6px solid #a8a8a8;border-radius:1.5px"></div>
<div class="b" style="left:334.1px;top:41.19999999999999px;width:6.4px;height:6.8px;background:#ffff3c;"></div>
<div class="t" style="left:341.5px;top:41.48px;font-size:5.2px;line-height:6.24px;color:#222;letter-spacing:-0.483px;">ﾊﾞﾈ付き6DOF (標</div>
<svg class="b" style="left:379.10px;top:42.90px" width="4.0" height="2.6" viewBox="0 0 4.0 2.6"><path d="M.5 .5L2.0 2.1L3.5 .5" fill="none" stroke="#666" stroke-width="0.6"/></svg>
<div class="b" style="left:181.3px;top:48.599999999999994px;width:98.4px;height:17.6px;background:#dfe7ea;border:3px solid #8fa9b4;"></div>
<div class="b" style="left:185.5px;top:52.400000000000006px;width:90px;height:10px;background:#fff;border-radius:1px;border-bottom:0.6px solid #999"></div>
<div class="t" style="left:187.3px;top:54.26px;font-size:5.4px;line-height:6.48px;color:#222;letter-spacing:0.200px;">接続剛体A</div>
<div class="t" style="left:214.5px;top:54.26px;font-size:5.4px;line-height:6.48px;color:#222;letter-spacing:0.250px;">:&nbsp; 0 : 頭</div>
<svg class="b" style="left:269.50px;top:55.90px" width="4.0" height="2.6" viewBox="0 0 4.0 2.6"><path d="M.5 .5L2.0 2.1L3.5 .5" fill="none" stroke="#777" stroke-width="0.6"/></svg>
<div class="t" style="left:281.5px;top:54.26px;font-size:5.4px;line-height:6.48px;color:#222;letter-spacing:-0.100px;">接続剛体B:</div>
<div class="b" style="left:313.5px;top:53.599999999999994px;width:53.4px;height:8.6px;background:#fff;border-radius:1px;border-bottom:0.6px solid #aaa"></div>
<div class="t" style="left:315.4px;top:54.68px;font-size:5.2px;line-height:6.24px;color:#222;letter-spacing:-0.050px;">17 : 左横髪.001</div>
<svg class="b" style="left:361.10px;top:56.30px" width="4.0" height="2.6" viewBox="0 0 4.0 2.6"><path d="M.5 .5L2.0 2.1L3.5 .5" fill="none" stroke="#777" stroke-width="0.6"/></svg>
<div class="b" style="left:185.0px;top:69px;width:142.5px;height:29.5px;border:0.5px solid #e6e6e6;border-radius:1px"></div>
<div class="t" style="left:190.4px;top:65.76px;font-size:5.4px;line-height:6.48px;color:#222;letter-spacing:0.780px;"><span style='background:#f0f0f0;padding:0 1px;margin-left:-1px'>位置/回転</span></div>
<div class="b" style="left:341.5px;top:66.80000000000001px;width:43.5px;height:7.6px;background:#fbfbfb;border:0.5px solid #dadada;border-radius:1px"></div>
<svg class="b" style="left:379.10px;top:68.90px" width="4.0" height="2.6" viewBox="0 0 4.0 2.6"><path d="M.5 .5L2.0 2.1L3.5 .5" fill="none" stroke="#999" stroke-width="0.6"/></svg>
<div class="t" style="left:190.4px;top:75.96px;font-size:5.4px;line-height:6.48px;color:#222;letter-spacing:0.050px;">位置</div>
<div class="t" style="left:202.5px;top:76.08px;font-size:5.2px;line-height:6.24px;color:#333;">:</div>
<div class="t" style="left:207.1px;top:76.08px;font-size:5.2px;line-height:6.24px;color:#333;">x</div>
<div class="f" style="left:212.90px;top:75.60px;width:30.2px;height:7.2px;line-height:7.0px;">0.0633166</div>
<div class="t" style="left:247.89999999999998px;top:76.08px;font-size:5.2px;line-height:6.24px;color:#333;">y</div>
<div class="f" style="left:253.50px;top:75.60px;width:29px;height:7.2px;line-height:7.0px;">17.16861</div>
<div class="t" style="left:287.9px;top:76.08px;font-size:5.2px;line-height:6.24px;color:#333;">z</div>
<div class="f" style="left:293.30px;top:75.60px;width:29.2px;height:7.2px;line-height:7.0px;">-0.603775</div>
<div class="btn" style="left:333.80px;top:75.20px;width:45px;height:8.8px;line-height:8.0px;letter-spacing:-0.35px;">←ボーン位置設定</div>
<div class="t" style="left:190.4px;top:87.56px;font-size:5.4px;line-height:6.48px;color:#222;letter-spacing:0.050px;">回転</div>
<div class="t" style="left:202.5px;top:87.68px;font-size:5.2px;line-height:6.24px;color:#333;">:</div>
<div class="t" style="left:207.1px;top:87.68px;font-size:5.2px;line-height:6.24px;color:#333;">x</div>
<div class="f" style="left:212.90px;top:87.20px;width:30.2px;height:7.2px;line-height:7.0px;">0</div>
<div class="t" style="left:247.89999999999998px;top:87.68px;font-size:5.2px;line-height:6.24px;color:#333;">y</div>
<div class="f" style="left:253.50px;top:87.20px;width:29px;height:7.2px;line-height:7.0px;">0</div>
<div class="t" style="left:287.9px;top:87.68px;font-size:5.2px;line-height:6.24px;color:#333;">z</div>
<div class="f" style="left:293.30px;top:87.20px;width:29.2px;height:7.2px;line-height:7.0px;">0</div>
<div class="b" style="left:332.0px;top:87px;width:52px;height:8.2px;background:#f6f6f6;border:0.5px solid #e2e2e2;border-radius:1px"></div>
<div class="t" style="left:334.0px;top:88.30px;font-size:5px;line-height:6.00px;color:#b8b8b8;">← 動作:</div>
<svg class="b" style="left:378.40px;top:89.90px" width="4.0" height="2.6" viewBox="0 0 4.0 2.6"><path d="M.5 .5L2.0 2.1L3.5 .5" fill="none" stroke="#c4c4c4" stroke-width="0.6"/></svg>
<div class="b" style="left:185.0px;top:105.4px;width:199.5px;height:26.5px;border:0.5px solid #e6e6e6;border-radius:1px"></div>
<div class="t" style="left:190.4px;top:102.16px;font-size:5.4px;line-height:6.48px;color:#222;letter-spacing:-0.238px;"><span style='background:#f0f0f0;padding:0 1px;margin-left:-1px'>制限/パラメータ</span></div>
<div class="t" style="left:190.4px;top:110.96px;font-size:5.4px;line-height:6.48px;color:#222;letter-spacing:0.050px;">移動</div>
<div class="t" style="left:202.5px;top:111.08px;font-size:5.2px;line-height:6.24px;color:#333;">:</div>
<div class="t" style="left:207.1px;top:111.08px;font-size:5.2px;line-height:6.24px;color:#333;">x</div>
<div class="f" style="left:212.70px;top:110.60px;width:22.4px;height:7.2px;line-height:7.0px;">0</div>
<div class="f" style="left:240.50px;top:110.60px;width:22.6px;height:7.2px;line-height:7.0px;">0</div>
<div class="f" style="left:270.70px;top:110.60px;width:22.2px;height:7.2px;line-height:7.0px;">0</div>
<div class="f" style="left:299.50px;top:110.60px;width:22.4px;height:7.2px;line-height:7.0px;">0</div>
<div class="f" style="left:329.50px;top:110.60px;width:22.8px;height:7.2px;line-height:7.0px;">0</div>
<div class="f" style="left:357.80px;top:110.60px;width:22.8px;height:7.2px;line-height:7.0px;">0</div>
<div class="t" style="left:236.3px;top:111.20px;font-size:5px;line-height:6.00px;color:#555;">~</div>
<div class="t" style="left:294.5px;top:111.20px;font-size:5px;line-height:6.00px;color:#555;">~</div>
<div class="t" style="left:353.7px;top:111.20px;font-size:5px;line-height:6.00px;color:#555;">~</div>
<div class="t" style="left:265.7px;top:111.08px;font-size:5.2px;line-height:6.24px;color:#333;">y</div>
<div class="t" style="left:324.5px;top:111.08px;font-size:5.2px;line-height:6.24px;color:#333;">z</div>
<div class="t" style="left:190.4px;top:121.96px;font-size:5.4px;line-height:6.48px;color:#222;letter-spacing:0.050px;">回転</div>
<div class="t" style="left:202.5px;top:122.08px;font-size:5.2px;line-height:6.24px;color:#333;">:</div>
<div class="t" style="left:207.1px;top:122.08px;font-size:5.2px;line-height:6.24px;color:#333;">x</div>
<div class="f" style="left:212.70px;top:121.60px;width:22.4px;height:7.2px;line-height:7.0px;">-10.00</div>
<div class="f" style="left:240.50px;top:121.60px;width:22.6px;height:7.2px;line-height:7.0px;">10.00</div>
<div class="f" style="left:270.70px;top:121.60px;width:22.2px;height:7.2px;line-height:7.0px;">-10.00</div>
<div class="f" style="left:299.50px;top:121.60px;width:22.4px;height:7.2px;line-height:7.0px;">10.00</div>
<div class="f" style="left:329.50px;top:121.60px;width:22.8px;height:7.2px;line-height:7.0px;">-10.00</div>
<div class="f" style="left:357.80px;top:121.60px;width:22.8px;height:7.2px;line-height:7.0px;">10.00</div>
<div class="t" style="left:236.3px;top:122.20px;font-size:5px;line-height:6.00px;color:#555;">~</div>
<div class="t" style="left:294.5px;top:122.20px;font-size:5px;line-height:6.00px;color:#555;">~</div>
<div class="t" style="left:353.7px;top:122.20px;font-size:5px;line-height:6.00px;color:#555;">~</div>
<div class="t" style="left:265.7px;top:122.08px;font-size:5.2px;line-height:6.24px;color:#333;">y</div>
<div class="t" style="left:324.5px;top:122.08px;font-size:5.2px;line-height:6.24px;color:#333;">z</div>
<div class="b" style="left:185.0px;top:139.6px;width:142.5px;height:26.5px;border:0.5px solid #e6e6e6;border-radius:1px"></div>
<div class="t" style="left:190.4px;top:136.46px;font-size:5.4px;line-height:6.48px;color:#222;letter-spacing:-0.700px;"><span style='background:#f0f0f0;padding:0 1px;margin-left:-1px'>ばね</span></div>
<div class="t" style="left:190.4px;top:145.06px;font-size:5.4px;line-height:6.48px;color:#222;letter-spacing:0.050px;">移動</div>
<div class="t" style="left:202.5px;top:145.18px;font-size:5.2px;line-height:6.24px;color:#333;">:</div>
<div class="t" style="left:207.1px;top:145.18px;font-size:5.2px;line-height:6.24px;color:#333;">x</div>
<div class="f" style="left:212.90px;top:144.70px;width:30.2px;height:7.2px;line-height:7.0px;">0</div>
<div class="t" style="left:247.89999999999998px;top:145.18px;font-size:5.2px;line-height:6.24px;color:#333;">y</div>
<div class="f" style="left:253.50px;top:144.70px;width:29px;height:7.2px;line-height:7.0px;">0</div>
<div class="t" style="left:287.9px;top:145.18px;font-size:5.2px;line-height:6.24px;color:#333;">z</div>
<div class="f" style="left:293.30px;top:144.70px;width:29.2px;height:7.2px;line-height:7.0px;">0</div>
<div class="t" style="left:190.4px;top:156.06px;font-size:5.4px;line-height:6.48px;color:#222;letter-spacing:0.050px;">回転</div>
<div class="t" style="left:202.5px;top:156.18px;font-size:5.2px;line-height:6.24px;color:#333;">:</div>
<div class="t" style="left:207.1px;top:156.18px;font-size:5.2px;line-height:6.24px;color:#333;">x</div>
<div class="f" style="left:212.90px;top:155.70px;width:30.2px;height:7.2px;line-height:7.0px;">0</div>
<div class="t" style="left:247.89999999999998px;top:156.18px;font-size:5.2px;line-height:6.24px;color:#333;">y</div>
<div class="f" style="left:253.50px;top:155.70px;width:29px;height:7.2px;line-height:7.0px;">0</div>
<div class="t" style="left:287.9px;top:156.18px;font-size:5.2px;line-height:6.24px;color:#333;">z</div>
<div class="f" style="left:293.30px;top:155.70px;width:29.2px;height:7.2px;line-height:7.0px;">0</div>
<div class="btn" style="left:341.30px;top:136.80px;width:43px;height:8.4px;line-height:7.6000000000000005px;letter-spacing:-0.2px;">↑制限値初期化</div>
<div class="btn" style="left:333.90px;top:149.80px;width:45.8px;height:8.4px;line-height:7.6000000000000005px;letter-spacing:-0.45px;">パラメータ初期化</div>
<div class="btn" style="left:345.90px;top:162.00px;width:42.2px;height:9.4px;line-height:8.6px;border-color:#9a9a9a;background:#f4f4f4;letter-spacing:-0.5px;">↓パラメータ説明</div>
<div class="t" style="left:190.5px;top:177.16px;font-size:5.4px;line-height:6.48px;color:#222;letter-spacing:0.064px;">※Joint変更時はパラメータ/制限値を初期化推奨</div>
<div class="b" style="left:190.7px;top:189px;width:4.2px;height:4.4px;background:#111;"></div>
<div class="t" style="left:195.7px;top:187.96px;font-size:5.4px;line-height:6.48px;color:#111;letter-spacing:0.200px;">共通</div>
<div class="t" style="left:190.5px;top:193.56px;font-size:5.4px;line-height:6.48px;color:#222;letter-spacing:0.344px;">[制限] : A - B&nbsp; | 範囲(移動:空間距離/回転:軸回転度数)</div>
<div class="t" style="left:191.5px;top:204.96px;font-size:5.4px;line-height:6.48px;color:#222;letter-spacing:0.171px;">A &lt; B&nbsp; | 範囲で制限</div>
<div class="t" style="left:239.5px;top:211.28px;font-size:5.2px;line-height:6.24px;color:#333;letter-spacing:-0.721px;">A = B&nbsp; | 固定 / A &gt; B | 制限なし(※バネ付き以外) ※安定性は低い</div>
<div class="b" style="left:384.1px;top:185px;width:0.7px;height:7px;background:#777;"></div>
</div>
</div></div></div>
</body></html>
